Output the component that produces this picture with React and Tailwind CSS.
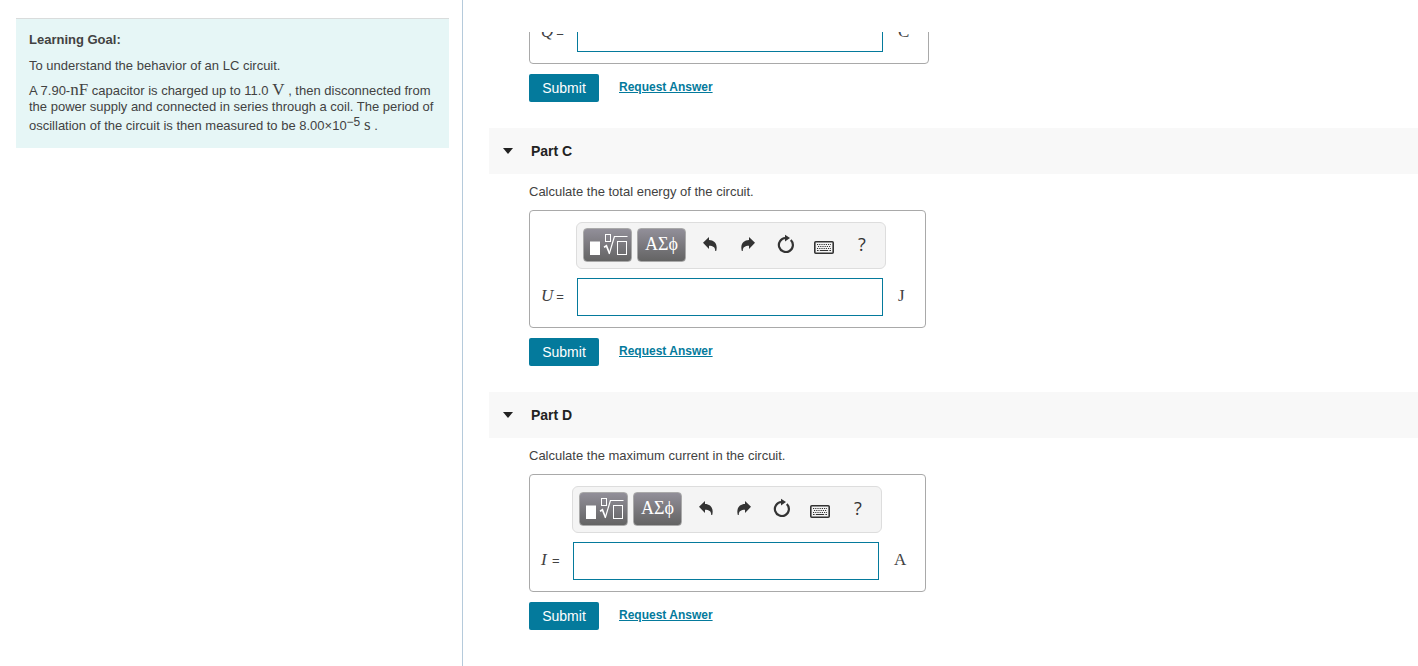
import React from 'react';

const parts = [
  {
    id: 'c',
    title: 'Part C',
    question: 'Calculate the total energy of the circuit.',
    symbol: 'U',
    unit: 'J',
    labelWidth: 'w-[35px]',
  },
  {
    id: 'd',
    title: 'Part D',
    question: 'Calculate the maximum current in the circuit.',
    symbol: 'I',
    unit: 'A',
    labelWidth: 'w-[31px]',
  },
];

const TemplateIcon = () => (
  <svg width="47" height="32" viewBox="0 0 47 32" fill="none" stroke="#fff" aria-hidden="true">
    <rect x="6" y="12.5" width="10" height="13.5" fill="#fff" stroke="none" />
    <rect x="21.5" y="5.5" width="5" height="7" strokeWidth="1" />
    <path d="M20 18.2l2.4-1.4 3 7.4" strokeWidth="1.7" />
    <path d="M25.2 25L30.4 7.5H43.5" strokeWidth="1.2" />
    <rect x="33.5" y="12.5" width="9" height="13" strokeWidth="1" />
  </svg>
);

const UndoIcon = () => (
  <svg width="14" height="14" viewBox="0 0 14 14" fill="#333" aria-hidden="true">
    <path d="M0 5.8L6 0v3c5.4.1 9 4 7.2 11h-1C12.4 10.4 10.2 8.7 6 8.7V12z" />
  </svg>
);

const RedoIcon = () => (
  <svg width="14" height="14" viewBox="0 0 14 14" fill="#333" aria-hidden="true">
    <path d="M14 5.8L8 0v3C2.6 3.1-1 7 .8 14h1C1.6 10.4 3.8 8.7 8 8.7V12z" />
  </svg>
);

const ResetIcon = () => (
  <svg width="18" height="20" viewBox="0 0 18 20" fill="none" aria-hidden="true">
    <path d="M13.8 6A7 7 0 1 1 8.4 4" stroke="#333" strokeWidth="2.2" />
    <path d="M8 .8l5 3.3-5 3.4z" fill="#333" />
  </svg>
);

const KeyboardIcon = () => (
  <svg width="20" height="13" viewBox="0 0 20 13" fill="none" stroke="#333" aria-hidden="true">
    <rect x=".8" y=".8" width="18.4" height="11.4" rx="1" strokeWidth="1.6" />
    <path d="M3 3.5h14M4 5.5h13M3 7.5h14" strokeWidth="1" strokeDasharray="1.2 1" />
    <path d="M3 9.5h1.6M5.8 9.5h8.4M15.4 9.5H17" strokeWidth="1" />
  </svg>
);

const ToolButton = ({ label, children }) => (
  <button type="button" aria-label={label} className="flex h-[34px] w-[38px] items-center justify-center pb-0.5">
    {children}
  </button>
);

const Toolbar = () => (
  <div className="flex h-[47px] w-[310px] items-start rounded-md border border-[#ddd] bg-[#f4f4f4] pl-[6px] pt-[5px]">
    <button
      type="button"
      aria-label="Templates"
      className="flex h-[34px] w-[49px] items-center justify-center rounded border border-[#aaa] bg-linear-to-b from-[#928f99] to-[#646464]"
    >
      <TemplateIcon />
    </button>
    <button
      type="button"
      aria-label="Symbols"
      className="ml-[5px] mr-[5px] h-[34px] w-[49px] rounded border border-[#aaa] bg-linear-to-b from-[#928f99] to-[#646464] pb-0.5 font-['Liberation_Serif',serif] text-[18px] leading-7 text-white"
    >
      ΑΣϕ
    </button>
    <ToolButton label="Undo"><UndoIcon /></ToolButton>
    <ToolButton label="Redo"><RedoIcon /></ToolButton>
    <ToolButton label="Reset"><ResetIcon /></ToolButton>
    <ToolButton label="Keyboard shortcuts">
      <span className="pt-[6px]"><KeyboardIcon /></span>
    </ToolButton>
    <ToolButton label="Help">
      <span className="font-['Open_Sans',sans-serif] text-[18px] leading-5 text-[#333]">?</span>
    </ToolButton>
  </div>
);

const AnswerRow = ({ id, symbol, unit, labelWidth }) => (
  <div className="flex items-center">
    <label htmlFor={id} className={`${labelWidth} flex shrink-0 items-baseline gap-[3px] pb-0.5 text-[13px] leading-5`}>
      <i className="min-w-2 font-['Liberation_Serif',serif] text-[17px]">{symbol}</i>
      <span>=</span>
    </label>
    <input
      id={id}
      type="text"
      className="mx-px h-[38px] w-[306px] border border-[#047a9c] bg-white px-2 text-sm outline-none"
    />
    <span className="pb-0.5 pl-[14px] font-['Liberation_Serif',serif] text-[17px] leading-5">{unit}</span>
  </div>
);

const Actions = () => (
  <div className="mt-[10px] flex items-start">
    <button type="button" className="h-7 w-[70px] rounded-xs bg-[#047a9c] text-sm text-white">
      Submit
    </button>
    <a href="#answer" className="ml-5 pt-1 text-[12px] font-bold leading-[18px] text-[#047a9c] underline">
      Request Answer
    </a>
  </div>
);

const Part = ({ id, title, question, symbol, unit, labelWidth }) => (
  <section className="mt-[26px]">
    <header className="flex h-[46px] items-center bg-[#f8f8f8] pl-[14px]">
      <button type="button" aria-label={`Collapse ${title}`} className="mr-[18px]">
        <svg width="10" height="6" viewBox="0 0 10 6" fill="#222" aria-hidden="true">
          <path d="M0 0h10L5 6z" />
        </svg>
      </button>
      <h2 className="text-sm font-bold text-[#222]">{title}</h2>
    </header>
    <div className="pl-10">
      <p className="mt-[9px] text-[13px] leading-[18px]">{question}</p>
      <div className="mt-[9px] h-[118px] w-[397px] rounded border border-[#a9a9a9] pl-[11px] pt-[11px]">
        <div className="mb-[9px] flex">
          <div className={`${labelWidth} shrink-0`} />
          <Toolbar />
        </div>
        <AnswerRow id={id} symbol={symbol} unit={unit} labelWidth={labelWidth} />
      </div>
      <Actions />
    </div>
  </section>
);

const App = () => {
  return (
    <div className="flex min-h-screen bg-white font-['Liberation_Sans',Arial,sans-serif] text-[#424242]">
      <aside className="w-[463px] shrink-0 border-r border-[#b5cadb] pl-4 pr-[13px] pt-[18px]">
        <div className="border-t border-[#d9dcdc] bg-[#e6f6f6] px-[13px] pb-[14px] pt-3 text-[13px]">
          <h2 className="font-bold leading-[18px]">Learning Goal:</h2>
          <p className="mt-2 leading-[18px]">To understand the behavior of an LC circuit.</p>
          <p className="mt-[7px] leading-4">
            A 7.90-<span className="font-['Liberation_Serif',serif] text-[17px] leading-4">nF</span> capacitor
            is charged up to 11.0{' '}
            <span className="font-['Liberation_Serif',serif] text-[17px] leading-4">V</span> , then disconnected from
            the power supply and connected in series through a coil. The period of
            oscillation of the circuit is then measured to be 8.00×10
            <span className="align-[4px] text-[12px] leading-[14px]">−5</span>{' '}
            <span className="font-['Liberation_Serif',serif] text-[17px] leading-4">s</span> .
          </p>
        </div>
      </aside>

      <main className="min-w-0 flex-1 pl-[26px] pt-8">
        {/* end of Part B, scrolled under the top edge */}
        <div className="pl-10">
          <div className="flex h-8 flex-col justify-end overflow-hidden">
            <div className="w-[400px] shrink-0 rounded border border-[#a9a9a9] pb-[11px] pl-[11px]">
              <AnswerRow id="b" symbol="Q" unit="C" labelWidth="w-[35px]" />
            </div>
          </div>
          <Actions />
        </div>

        {parts.map((part) => (
          <Part key={part.id} {...part} />
        ))}
      </main>
    </div>
  );
};

export default App;
